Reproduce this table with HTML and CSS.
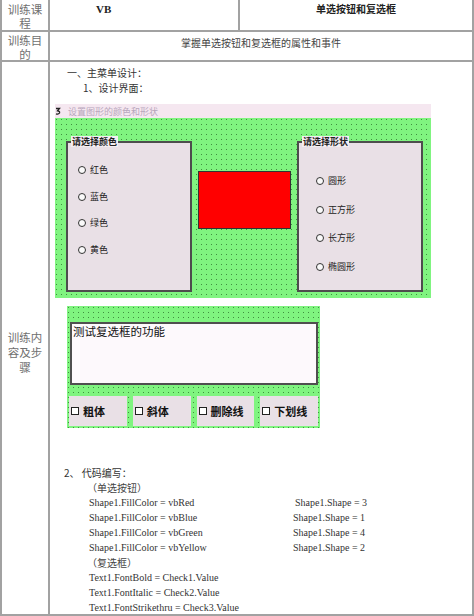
FILE: index.html
```html
<!DOCTYPE html>
<html lang="zh-CN">
<head>
<meta charset="utf-8">
<title>单选按钮和复选框</title>
<link rel="stylesheet" href="styles.css">
</head>
<body>
<div class="sheet">
  <div class="cell label r1">训练课<br>程</div>
  <div class="cell c-vb">VB</div>
  <div class="cell c-title">单选按钮和复选框</div>
  <div class="cell label r2">训练目<br>的</div>
  <div class="cell c-aim">掌握单选按钮和复选框的属性和事件</div>
  <div class="cell label r3"><div class="label-text">训练内<br>容及步<br>骤</div></div>
  <div class="cell c-body">
    <p class="h1">一、主菜单设计：</p>
    <p class="h2">1、设计界面：</p>

    <div class="vbform">
      <div class="titlebar">
        <svg class="ico" width="6" height="8" viewBox="0 0 6 8"><path d="M1 1.5 H4.5 L2.5 3.8 Q5 4.2 4.5 6 Q3.5 7.6 1 6.8" fill="none" stroke="#222" stroke-width="1.3"/></svg>
        <span>设置图形的颜色和形状</span>
      </div>
      <div class="canvas dots">
        <div class="frame colors">
          <span class="legend">请选择颜色</span>
          <div class="opts">
            <div class="radio"><span class="dot"></span>红色</div>
            <div class="radio"><span class="dot"></span>蓝色</div>
            <div class="radio"><span class="dot"></span>绿色</div>
            <div class="radio"><span class="dot"></span>黄色</div>
          </div>
        </div>
        <div class="shape"></div>
        <div class="frame shapes">
          <span class="legend">请选择形状</span>
          <div class="opts">
            <div class="radio"><span class="dot"></span>圆形</div>
            <div class="radio"><span class="dot"></span>正方形</div>
            <div class="radio"><span class="dot"></span>长方形</div>
            <div class="radio"><span class="dot"></span>椭圆形</div>
          </div>
        </div>
      </div>
    </div>

    <div class="vbform2 dots">
      <div class="textbox">测试复选框的功能</div>
      <div class="checks">
        <div class="chk"><span class="box"></span>粗体</div>
        <div class="chk"><span class="box"></span>斜体</div>
        <div class="chk"><span class="box"></span>删除线</div>
        <div class="chk"><span class="box"></span>下划线</div>
      </div>
    </div>

    <p class="h3">2、 代码编写：</p>
    <p class="sub">（单选按钮）</p>
    <div class="code"><span class="l">Shape1.FillColor = vbRed</span><span class="r r0">Shape1.Shape = 3</span></div>
    <div class="code"><span class="l">Shape1.FillColor = vbBlue</span><span class="r">Shape1.Shape = 1</span></div>
    <div class="code"><span class="l">Shape1.FillColor = vbGreen</span><span class="r">Shape1.Shape = 4</span></div>
    <div class="code"><span class="l">Shape1.FillColor = vbYellow</span><span class="r">Shape1.Shape = 2</span></div>
    <p class="sub">（复选框）</p>
    <div class="code"><span class="l">Text1.FontBold = Check1.Value</span></div>
    <div class="code"><span class="l">Text1.FontItalic = Check2.Value</span></div>
    <div class="code"><span class="l">Text1.FontStrikethru = Check3.Value</span></div>
  </div>
</div>
</body>
</html>
```

FILE: styles.css
```css
* { box-sizing: border-box; }
html, body { margin: 0; padding: 0; background: #fff; }
body {
  width: 474px;
  height: 616px;
  overflow: hidden;
  font-family: "Liberation Serif", "Noto Sans CJK SC", serif;
  color: #333;
}
p { margin: 0; }

.sheet {
  display: grid;
  grid-template-columns: 46px 188px 232px;
  grid-template-rows: 30px 28px 552px;
  gap: 2px;
  padding: 0 2px 2px 2px;
  width: 474px;
  height: 616px;
  background: #a2a2a2;
}
.cell { background: #fff; }
.c-aim, .c-body { grid-column: 2 / 4; }
.c-body { overflow: hidden; }

.label {
  font-family: "Noto Sans CJK SC", sans-serif;
  font-size: 11.5px;
  line-height: 14px;
  color: #707070;
  text-align: center;
}
.r1 { padding-top: 2px; }
.r2 { padding-top: 0.5px; }
.r3 { line-height: 15px; }
.r3 .label-text { margin-top: 268px; }

.c-vb {
  font-family: "Liberation Serif", serif;
  font-weight: bold;
  font-size: 11px;
  line-height: 18px;
  padding-left: 46px;
  color: #222;
}
.c-title {
  font-family: "Noto Sans CJK SC", sans-serif;
  font-weight: bold;
  font-size: 10px;
  line-height: 18px;
  text-align: center;
  color: #222;
}
.c-aim {
  font-family: "Noto Sans CJK SC", sans-serif;
  font-size: 10px;
  line-height: 14px;
  padding-top: 4px;
  text-align: center;
  color: #444;
}

.c-body {
  font-family: "Noto Sans CJK SC", sans-serif;
  color: #333;
  padding-top: 4px;
}
.h1 { font-size: 10px; line-height: 14.5px; padding-left: 17px; }
.h2 { font-size: 10px; line-height: 14.5px; padding-left: 33px; }

/* first VB form */
.vbform { margin: 9px 0 0 5px; width: 376px; }
.titlebar {
  height: 14px;
  background: #f5e7f0;
  display: flex;
  align-items: center;
  gap: 7px;
  font-size: 9px;
  color: #b8a6bc;
}
.dots {
  background-color: #80f480;
  background-image: radial-gradient(circle at 1.5px 1.5px, #3f8f3f 0.6px, rgba(0,0,0,0) 1px);
  background-size: 5px 5px;
}
.canvas {
  height: 180px;
  display: flex;
  align-items: flex-start;
  padding: 23px 0 0 11px;
  gap: 6px;
}
.frame {
  width: 126px;
  height: 151px;
  border: 2px solid #4d4d4d;
  background: #e9e0e6;
  font-size: 9px;
  color: #222;
}
.legend {
  display: inline-block;
  margin: -7px 0 0 3px;
  padding: 0 1px;
  line-height: 11px;
  background: #f4eef2;
  font-weight: bold;
  vertical-align: top;
}
.opts { display: flex; flex-direction: column; }
.colors .opts { padding: 8px 0 0 10px; gap: 14.7px; }
.shapes .opts { padding: 19px 0 0 17px; gap: 16.7px; }
.radio { display: flex; align-items: center; gap: 4px; line-height: 12px; height: 12px; }
.dot {
  width: 8px;
  height: 8px;
  border: 1px solid #333;
  border-radius: 50%;
  background: #fafafa;
}
.shape {
  width: 93px;
  height: 58px;
  margin-top: 30px;
  background: #ff0000;
  border: 1px solid #333;
}

/* second VB form */
.vbform2 {
  margin: 8px 0 0 17px;
  width: 253px;
  height: 122px;
  padding: 16px 2px 2px 2px;
}
.textbox {
  margin-left: 1px;
  height: 63px;
  border: 2px solid #4f4f4f;
  background: #fdf9fc;
  font-size: 11.5px;
  line-height: 14px;
  color: #111;
  padding: 0 0 0 1px;
}
.checks {
  margin-top: 11px;
  display: flex;
  gap: 6px;
}
.chk {
  width: 58px;
  height: 30px;
  background: #e9e0e6;
  display: flex;
  align-items: center;
  gap: 4px;
  padding-left: 2px;
  font-size: 11px;
  font-weight: bold;
  color: #111;
}
.box {
  width: 8px;
  height: 8px;
  border: 1px solid #222;
  background: #fff;
}

/* code */
.h3 { font-size: 10px; line-height: 15px; padding-left: 14px; margin-top: 37px; }
.sub { font-size: 10px; line-height: 15px; padding-left: 37px; color: #444; }
.code {
  display: flex;
  font-family: "Liberation Serif", serif;
  font-size: 10px;
  line-height: 15px;
  color: #333;
  padding-left: 39px;
}
.code .l { width: 204px; }
.code .r0 { padding-left: 2px; }
```
